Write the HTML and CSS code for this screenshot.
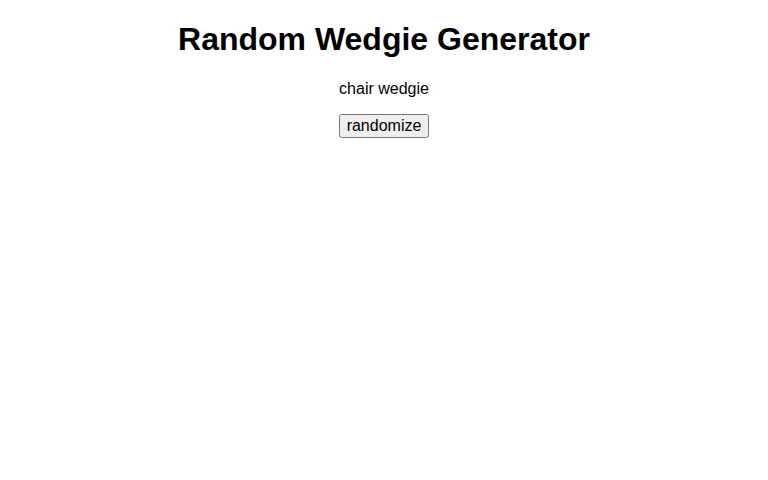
FILE: index.html
```html
<!DOCTYPE html>
<html lang="en">
<head>
    <meta charset="UTF-8">
    <meta name="viewport" content="width=device-width, initial-scale=1.0">
    <title>Random Wedgie Generator</title>
    <link rel="stylesheet" href="styles.css">
</head>
<body>
    <h1>Random Wedgie Generator</h1>
    <p id="wedgie">chair wedgie</p>
    <button onclick="randomize()">randomize</button>

    <script>
        const wedgies = ["chair wedgie", "atomic wedgie", "hanging wedgie", "reverse wedgie", "melvin"];

        function randomize() {
            let pick = wedgies[Math.floor(Math.random() * wedgies.length)];
            document.getElementById("wedgie").textContent = pick;
        }
    </script>
</body>
</html>
```

FILE: styles.css
```css
body {
    margin: 0 8px;
    font-family: "Liberation Sans", Arial, sans-serif;
    text-align: center;
}
button {
    font-family: "Liberation Sans", Arial, sans-serif;
    font-size: 16px;
}
```
